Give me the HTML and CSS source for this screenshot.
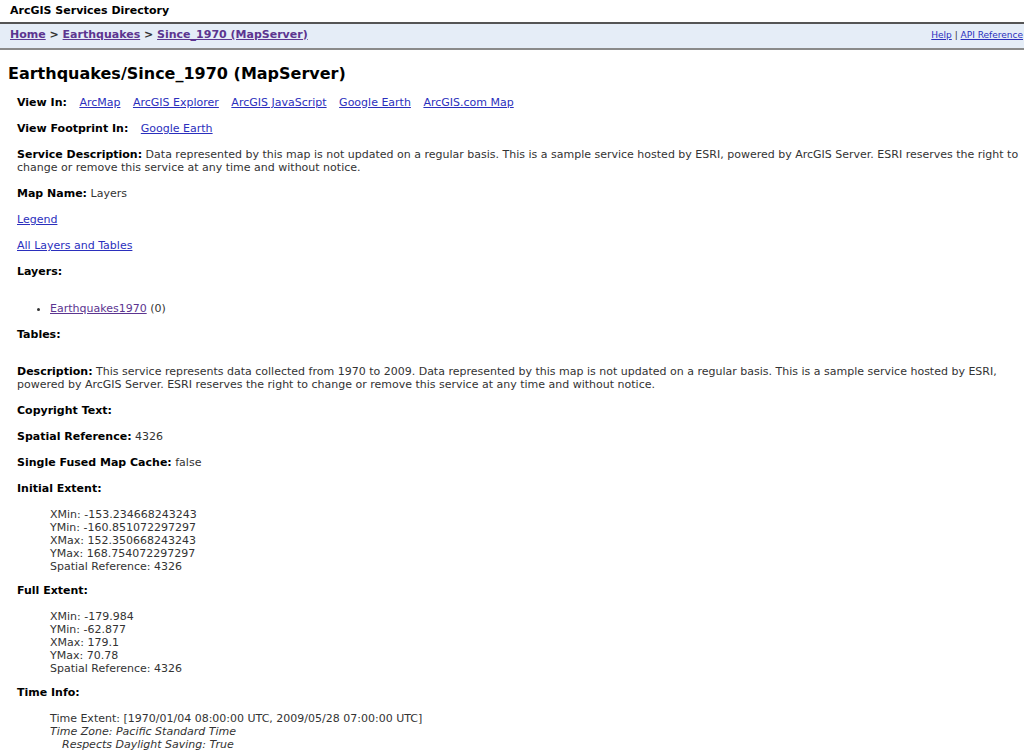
FILE: index.html
```html
<!DOCTYPE html>
<html lang="en">
<head>
<meta charset="UTF-8" />
<title>Earthquakes/Since_1970 (MapServer)</title>
<link rel="stylesheet" href="styles.css">
</head>
<body>

  <div class="page">
    <div class="title-cell">ArcGIS Services Directory</div>

    <div class="nav-bar">
      <div class="breadcrumbs">
        <a href="#" class="visited">Home</a> &gt;
        <a href="#" class="visited">Earthquakes</a> &gt;
        <a href="#" class="visited">Since_1970 (MapServer)</a>
      </div>
      <div class="api-ref">
        <a href="#">Help</a> | <a href="#">API Reference</a>
      </div>
    </div>

    <h2>Earthquakes/Since_1970 (MapServer)</h2>

    <div class="rbody">
      <p class="view-in"><b>View In:</b>
        <a href="#">ArcMap</a>
        <a href="#">ArcGIS Explorer</a>
        <a href="#">ArcGIS JavaScript</a>
        <a href="#">Google Earth</a>
        <a href="#">ArcGIS.com Map</a>
      </p>
      <p class="view-in"><b>View Footprint In:</b>
        <a href="#">Google Earth</a>
      </p>
      <p><b>Service Description:</b> Data represented by this map is not updated on a regular basis. This is a sample service hosted by ESRI, powered by ArcGIS Server. ESRI reserves the right to change or remove this service at any time and without notice.</p>
      <p><b>Map Name:</b> Layers</p>
      <p><a href="#">Legend</a></p>
      <p><a href="#">All Layers and Tables</a></p>
      <p><b>Layers:</b></p>
      <ul class="layers">
        <li><a href="#" class="visited">Earthquakes1970</a> (0)</li>
      </ul>
      <p><b>Tables:</b></p>
      <ul class="layers"></ul>
      <p><b>Description:</b> This service represents data collected from 1970 to 2009. Data represented by this map is not updated on a regular basis. This is a sample service hosted by ESRI, powered by ArcGIS Server. ESRI reserves the right to change or remove this service at any time and without notice.</p>
      <p><b>Copyright Text:</b> </p>
      <p><b>Spatial Reference:</b> 4326</p>
      <p><b>Single Fused Map Cache:</b> false</p>
      <p><b>Initial Extent:</b></p>
      <ul class="extent">
        <li>XMin: -153.234668243243</li>
        <li>YMin: -160.851072297297</li>
        <li>XMax: 152.350668243243</li>
        <li>YMax: 168.754072297297</li>
        <li>Spatial Reference: 4326</li>
      </ul>
      <p><b>Full Extent:</b></p>
      <ul class="extent">
        <li>XMin: -179.984</li>
        <li>YMin: -62.877</li>
        <li>XMax: 179.1</li>
        <li>YMax: 70.78</li>
        <li>Spatial Reference: 4326</li>
      </ul>
      <p><b>Time Info:</b></p>
      <ul class="extent">
        <li>Time Extent: [1970/01/04 08:00:00 UTC, 2009/05/28 07:00:00 UTC]</li>
        <li><i>Time Zone: Pacific Standard Time</i></li>
        <li class="sub"><i>Respects Daylight Saving: True</i></li>
      </ul>
    </div>
  </div>

</body>
</html>
```

FILE: styles.css
```css
html {
  overflow: hidden;
}

body {
  margin: 0;
  font-family: "DejaVu Sans", Verdana, sans-serif;
  font-size: 11px;
  line-height: 13px;
  color: #333;
  background-color: #fff;
}

.page {
  width: 1045px;
}

a {
  color: #2b2fbd;
}

a.visited {
  color: #5c3590;
}

b {
  color: #000;
}

.title-cell {
  font-weight: bold;
  color: #000;
  padding: 4px 10px 5px;
}

/* breadcrumb strip */
.nav-bar {
  display: flex;
  justify-content: space-between;
  align-items: center;
  background-color: #e5edf7;
  border-top: 2px solid #555;
  border-bottom: 2px solid #8a8a8a;
  padding: 2px 22px 6px 10px;
}

.breadcrumbs {
  font-weight: bold;
  color: #333;
}

.api-ref {
  font-size: 9px;
  padding-top: 3px;
}

h2 {
  font-size: 16px;
  line-height: 20px;
  color: #000;
  margin: 14px 8px 12px;
}

.rbody {
  padding: 0 10px 0 17px;
}

.rbody p {
  margin: 0 0 13px;
}

.view-in a {
  margin-left: 9px;
}

.layers {
  margin: 24px 0 13px;
  padding-left: 33px;
}

.extent {
  list-style: none;
  margin: 13px 0 11px;
  padding: 0 0 0 33px;
}

.extent .sub {
  padding-left: 12px;
}
```
